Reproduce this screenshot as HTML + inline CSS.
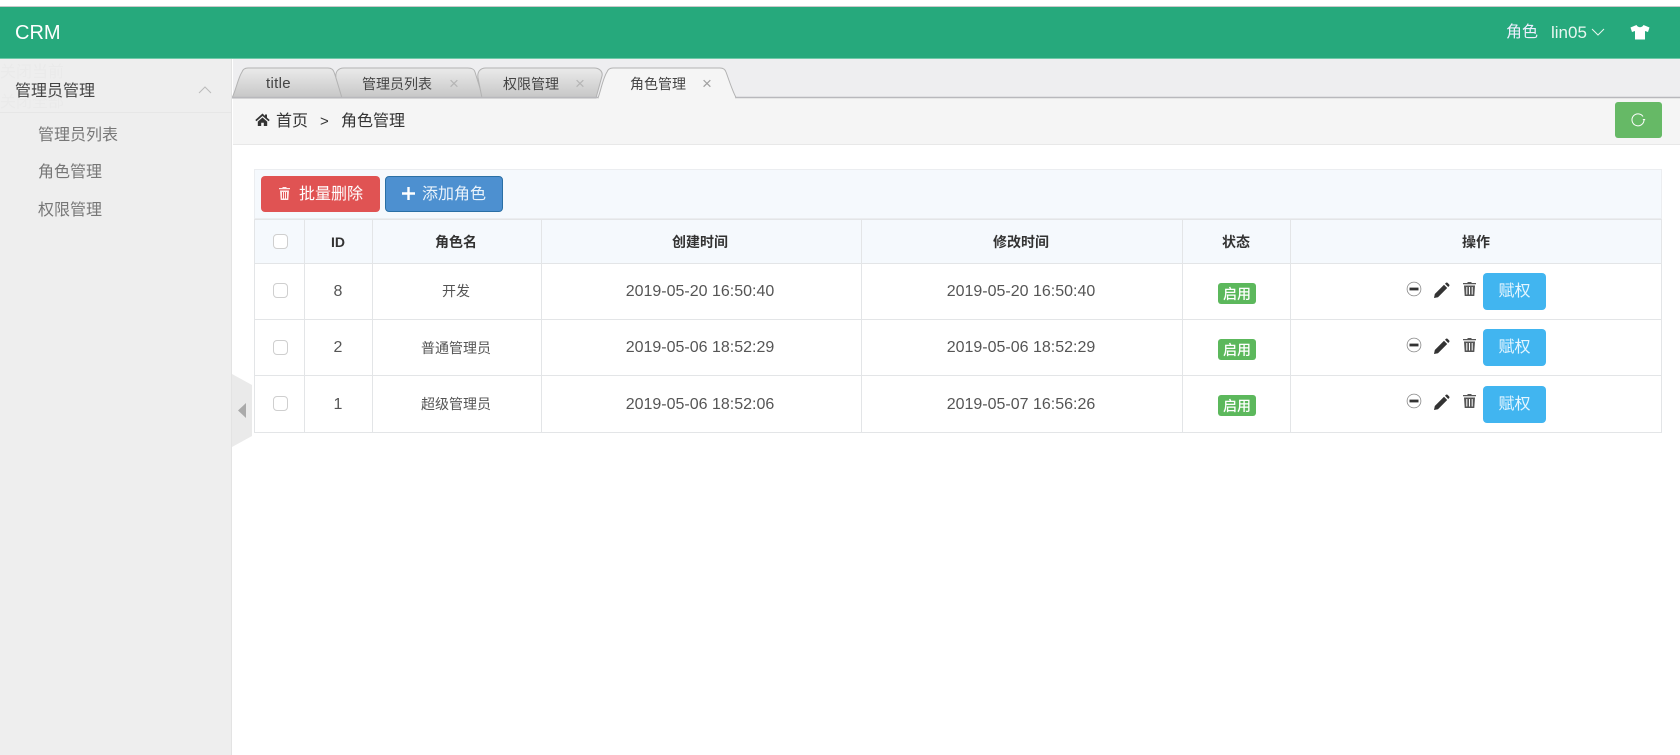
<!DOCTYPE html>
<html lang="zh"><head><meta charset="utf-8"><title>CRM</title>
<style>
*{box-sizing:border-box}
html,body{margin:0;padding:0;width:1680px;height:755px;overflow:hidden;background:#fff;font-family:"Liberation Sans","Noto Sans CJK SC",sans-serif;color:#555}
body{filter:blur(.35px)}
.a{position:absolute;white-space:nowrap}
.c{position:absolute;white-space:nowrap;text-align:center}
.v{position:absolute;background:#e3e5e7;width:1px}
.h{position:absolute;background:#e3e5e7;height:1px;left:254px;width:1408px}
.cb{position:absolute;left:273px;width:15px;height:15px;border:1px solid #cfcfcf;border-radius:4px;background:#fff}
.th{font-size:14px;font-weight:bold;color:#333;line-height:20px;top:232px}
.td{font-size:14px;color:#555;line-height:20px}
.dt{font-size:16px;color:#555;line-height:20px}
.lab{position:absolute;left:1218px;width:38px;height:21px;background:#5cb85c;border-radius:3px;color:#fff;font-size:14px;line-height:22px;text-align:center;font-weight:500}
.btn{position:absolute;left:1483px;width:63px;height:37px;background:#41b5f0;border-radius:4px;color:#e6f6ff;font-size:16px;line-height:37px;text-align:center}
.side{font-size:16px;color:#777;left:38px;line-height:24px}
.tab{font-size:14px;color:#444;line-height:20px;top:74px}
.x{font-size:17px;color:#b5b5b5;line-height:20px;top:74px}
</style></head><body>

<div class="a" style="left:0;top:6px;width:1680px;height:1px;background:#c9c9c9"></div>
<div class="a" style="left:0;top:7px;width:1680px;height:51px;background:#26a97c"></div>
<div class="a" style="left:0;top:58px;width:1680px;height:1px;background:#6fc9a8"></div>
<div class="a" style="left:15px;top:21px;font-size:20px;line-height:24px;color:#fff">CRM</div>
<div class="a" style="left:1506px;top:21px;font-size:16px;line-height:24px;color:#eef">角色</div>
<div class="a" style="left:1551px;top:21px;font-size:17px;line-height:24px;color:#e8f6f0">lin05</div>
<svg class="a" style="left:1591px;top:26px" width="14" height="12" viewBox="0 0 14 12"><path d="M1 3l6 6 6-6" fill="none" stroke="#e8f6f0" stroke-width="1"/></svg>
<svg class="a" style="left:1630px;top:24px" width="20" height="16" viewBox="0 0 20 16"><path d="M6.500 1L.5 3.500 2 8l3-1V15.500h10V7l3 1 1.500-4.500L13.500 1c-.6 1.400-2 2.200-3.500 2.200S7.100 2.400 6.500 1z" fill="#fff"/></svg>

<!-- sidebar -->
<div class="a" style="left:0;top:59px;width:232px;height:696px;background:#eee;border-right:1px solid #e3e3e3"></div>
<div class="a" style="left:0;top:63px;font-size:16px;line-height:20px;color:#eaeaea">关闭当前</div>
<div class="a" style="left:0;top:93px;font-size:16px;line-height:20px;color:#eaeaea">关闭全部</div>
<div class="a" style="left:15px;top:80px;font-size:16px;line-height:24px;color:#444">管理员管理</div>
<svg class="a" style="left:198px;top:85px" width="14" height="10" viewBox="0 0 14 10"><path d="M1 8l6-6 6 6" fill="none" stroke="#bbb" stroke-width="1"/></svg>
<div class="a" style="left:0;top:112px;width:231px;height:1px;background:#e6e6e6"></div>
<div class="a side" style="top:124px">管理员列表</div>
<div class="a side" style="top:161px">角色管理</div>
<div class="a side" style="top:199px">权限管理</div>

<!-- tab strip -->
<div class="a" style="left:233px;top:59px;width:1447px;height:39px;background:#eeeef0"></div>
<div class="a" style="left:233px;top:98px;width:1447px;height:47px;background:#f5f5f5;border-bottom:1px solid #e8e8e8"></div>
<svg class="a" style="left:232px;top:66px" width="1448" height="34" viewBox="0 0 1448 34">
<defs><linearGradient id="g" x1="0" y1="0" x2="0" y2="1"><stop offset="0" stop-color="#eaeaea"/><stop offset="1" stop-color="#c6c6c6"/></linearGradient></defs>
<path d="M0 32C4 24 6 12 10 6 11 3 13 2 16 2H96C99 2 101 3 102 6L111 32Z" fill="url(#g)" stroke="#b2b2b2" stroke-width="1"/>
<path d="M110 32L104 12C103 6 106 2 112 2H236C240 2 242 3 243 6L251 32Z" fill="url(#g)" stroke="#b2b2b2" stroke-width="1"/>
<path d="M250 32L246 12C245 6 248 2 254 2H362C368 2 371 6 370 10L364 32Z" fill="url(#g)" stroke="#b2b2b2" stroke-width="1"/>
<path d="M0 31.500H1448" stroke="#b8b8bc" stroke-width="1.500"/>
<path d="M366 32C369 24 371 12 375 6 376 3 378 2 381 2H488C491 2 493 3 494 6 497 14 500 24 504 31.500" fill="#f5f5f5" stroke="#b2b2b2" stroke-width="1"/>
<rect x="367" y="31" width="136" height="3" fill="#f5f5f5"/>
</svg>
<div class="a tab" style="left:266px;font-size:15px;letter-spacing:.3px">title</div>
<div class="a tab" style="left:362px">管理员列表</div><div class="a x" style="left:449px">×</div>
<div class="a tab" style="left:503px">权限管理</div><div class="a x" style="left:575px">×</div>
<div class="a tab" style="left:630px">角色管理</div><div class="a x" style="left:702px;color:#a0a0a0">×</div>

<!-- breadcrumb -->
<svg class="a" style="left:255px;top:113px" width="15" height="14" viewBox="0 0 15 14"><path d="M7.500 .5L0.300 7l1.100 1.200L7.500 3l6.100 5.200L14.700 7 12 4.600V1.500h-2V2.900z" fill="#333"/><path d="M2.800 8.600L7.500 4.500l4.700 4.100V13H8.800V9.800H6.200V13H2.800z" fill="#333"/></svg>
<div class="a" style="left:276px;top:110px;font-size:16px;line-height:24px;color:#333">首页</div>
<div class="a" style="left:320px;top:110px;font-size:15px;line-height:24px;color:#333">&gt;</div>
<div class="a" style="left:341px;top:110px;font-size:16px;line-height:24px;color:#333">角色管理</div>
<div class="a" style="left:1615px;top:102px;width:47px;height:36px;background:#66b966;border-radius:3px"></div>
<svg class="a" style="left:1630px;top:112px" width="18" height="16" viewBox="0 0 18 16"><path d="M13 4.500A6 6 0 1 0 14 8" fill="none" stroke="#fff" stroke-width="1"/><path d="M12.500 7h3l-1.500 2z" fill="#fff"/></svg>

<!-- collapse handle -->
<svg class="a" style="left:232px;top:373px" width="21" height="75" viewBox="0 0 21 75"><path d="M0 1L20 12V63L0 74Z" fill="#eaeaea"/><path d="M6 37.500L14 30V45Z" fill="#aaa"/></svg>

<!-- toolbar -->
<div class="a" style="left:254px;top:169px;width:1408px;height:50px;background:#f5f9fd;border:1px solid #ebedf0"></div>
<div class="a" style="left:261px;top:176px;width:119px;height:36px;background:#e05353;border-radius:4px"></div>
<svg class="a" style="left:278px;top:186px" width="13" height="15" viewBox="0 0 13 15"><path d="M4.500 2V1h4v1H12v1.300H1V2zM2 4.500h9L10.300 14H2.700z M4 6v6.500h1V6z M6 6v6.500h1V6z M8 6v6.500h1V6z" fill="#ffe9e9" fill-rule="evenodd"/></svg>
<div class="a" style="left:299px;top:183px;font-size:16px;line-height:24px;color:#fff">批量删除</div>
<div class="a" style="left:385px;top:176px;width:118px;height:36px;background:#4d90d0;border:1px solid #2a6fa5;border-radius:4px"></div>
<svg class="a" style="left:402px;top:187px" width="13" height="13" viewBox="0 0 13 13"><path d="M5.300 0h2.400v5.300H13v2.400H7.700V13H5.300V7.700H0V5.300h5.300z" fill="#fff"/></svg>
<div class="a" style="left:422px;top:183px;font-size:16px;line-height:24px;color:#eaf3fb">添加角色</div>

<!-- table -->
<div class="a" style="left:254px;top:220px;width:1408px;height:43px;background:#f5f9fd"></div>
<div class="h" style="top:219px"></div>
<div class="h" style="top:263px"></div>
<div class="h" style="top:319px"></div>
<div class="h" style="top:375px"></div>
<div class="h" style="top:432px"></div>
<div class="v" style="left:254px;top:220px;height:212px"></div>
<div class="v" style="left:304px;top:220px;height:212px"></div>
<div class="v" style="left:372px;top:220px;height:212px"></div>
<div class="v" style="left:541px;top:220px;height:212px"></div>
<div class="v" style="left:861px;top:220px;height:212px"></div>
<div class="v" style="left:1182px;top:220px;height:212px"></div>
<div class="v" style="left:1290px;top:220px;height:212px"></div>
<div class="v" style="left:1661px;top:220px;height:212px"></div>

<div class="cb" style="top:234px"></div>
<div class="c th" style="left:304px;width:68px">ID</div>
<div class="c th" style="left:372px;width:168px">角色名</div>
<div class="c th" style="left:540px;width:320px">创建时间</div>
<div class="c th" style="left:860px;width:322px">修改时间</div>
<div class="c th" style="left:1182px;width:108px">状态</div>
<div class="c th" style="left:1290px;width:372px">操作</div>

<!-- row 1 -->
<div class="cb" style="top:283px"></div>
<div class="c dt" style="left:304px;width:68px;top:282px">8</div>
<div class="c td" style="left:372px;width:168px;top:281px">开发</div>
<div class="c dt" style="left:540px;width:320px;top:282px">2019-05-20 16:50:40</div>
<div class="c dt" style="left:860px;width:322px;top:282px">2019-05-20 16:50:40</div>
<div class="lab" style="top:283px">启用</div>
<svg class="a" style="left:1406px;top:281px" width="16" height="16" viewBox="0 0 16 16"><circle cx="8" cy="8" r="6.900" fill="#fff" stroke="#888" stroke-width=".8"/><rect x="3.500" y="6.600" width="9" height="2.800" fill="#333"/></svg>
<svg class="a" style="left:1433px;top:282px" width="17" height="17" viewBox="0 0 17 17"><path d="M1 16l.8-4L11 2.800l3.200 3.200L5 15.200zM12 1.800l1-1c.5-.4 1.100-.4 1.500 0l1.700 1.700c.4.400.4 1 0 1.500l-1 1z" fill="#333"/></svg>
<svg class="a" style="left:1462px;top:281px" width="15" height="16" viewBox="0 0 15 16"><path d="M5.500 2V1h4v1H14v1.300H1V2zM2 4.500h11L12.300 15H2.700z M4.300 6v7.500h1V6z M7 6v7.500h1V6z M9.700 6v7.500h1V6z" fill="#555" fill-rule="evenodd"/></svg>
<div class="btn" style="top:273px">赋权</div>

<!-- row 2 -->
<div class="cb" style="top:340px"></div>
<div class="c dt" style="left:304px;width:68px;top:338px">2</div>
<div class="c td" style="left:372px;width:168px;top:338px">普通管理员</div>
<div class="c dt" style="left:540px;width:320px;top:338px">2019-05-06 18:52:29</div>
<div class="c dt" style="left:860px;width:322px;top:338px">2019-05-06 18:52:29</div>
<div class="lab" style="top:339px">启用</div>
<svg class="a" style="left:1406px;top:337px" width="16" height="16" viewBox="0 0 16 16"><circle cx="8" cy="8" r="6.900" fill="#fff" stroke="#888" stroke-width=".8"/><rect x="3.500" y="6.600" width="9" height="2.800" fill="#333"/></svg>
<svg class="a" style="left:1433px;top:338px" width="17" height="17" viewBox="0 0 17 17"><path d="M1 16l.8-4L11 2.800l3.200 3.200L5 15.200zM12 1.800l1-1c.5-.4 1.100-.4 1.500 0l1.700 1.700c.4.400.4 1 0 1.500l-1 1z" fill="#333"/></svg>
<svg class="a" style="left:1462px;top:337px" width="15" height="16" viewBox="0 0 15 16"><path d="M5.500 2V1h4v1H14v1.300H1V2zM2 4.500h11L12.300 15H2.700z M4.300 6v7.500h1V6z M7 6v7.500h1V6z M9.700 6v7.500h1V6z" fill="#555" fill-rule="evenodd"/></svg>
<div class="btn" style="top:329px">赋权</div>

<!-- row 3 -->
<div class="cb" style="top:396px"></div>
<div class="c dt" style="left:304px;width:68px;top:395px">1</div>
<div class="c td" style="left:372px;width:168px;top:394px">超级管理员</div>
<div class="c dt" style="left:540px;width:320px;top:395px">2019-05-06 18:52:06</div>
<div class="c dt" style="left:860px;width:322px;top:395px">2019-05-07 16:56:26</div>
<div class="lab" style="top:395px">启用</div>
<svg class="a" style="left:1406px;top:393px" width="16" height="16" viewBox="0 0 16 16"><circle cx="8" cy="8" r="6.900" fill="#fff" stroke="#888" stroke-width=".8"/><rect x="3.500" y="6.600" width="9" height="2.800" fill="#333"/></svg>
<svg class="a" style="left:1433px;top:394px" width="17" height="17" viewBox="0 0 17 17"><path d="M1 16l.8-4L11 2.800l3.200 3.200L5 15.200zM12 1.800l1-1c.5-.4 1.100-.4 1.500 0l1.700 1.700c.4.400.4 1 0 1.500l-1 1z" fill="#333"/></svg>
<svg class="a" style="left:1462px;top:393px" width="15" height="16" viewBox="0 0 15 16"><path d="M5.500 2V1h4v1H14v1.300H1V2zM2 4.500h11L12.300 15H2.700z M4.300 6v7.500h1V6z M7 6v7.500h1V6z M9.700 6v7.500h1V6z" fill="#555" fill-rule="evenodd"/></svg>
<div class="btn" style="top:386px">赋权</div>

</body></html>
